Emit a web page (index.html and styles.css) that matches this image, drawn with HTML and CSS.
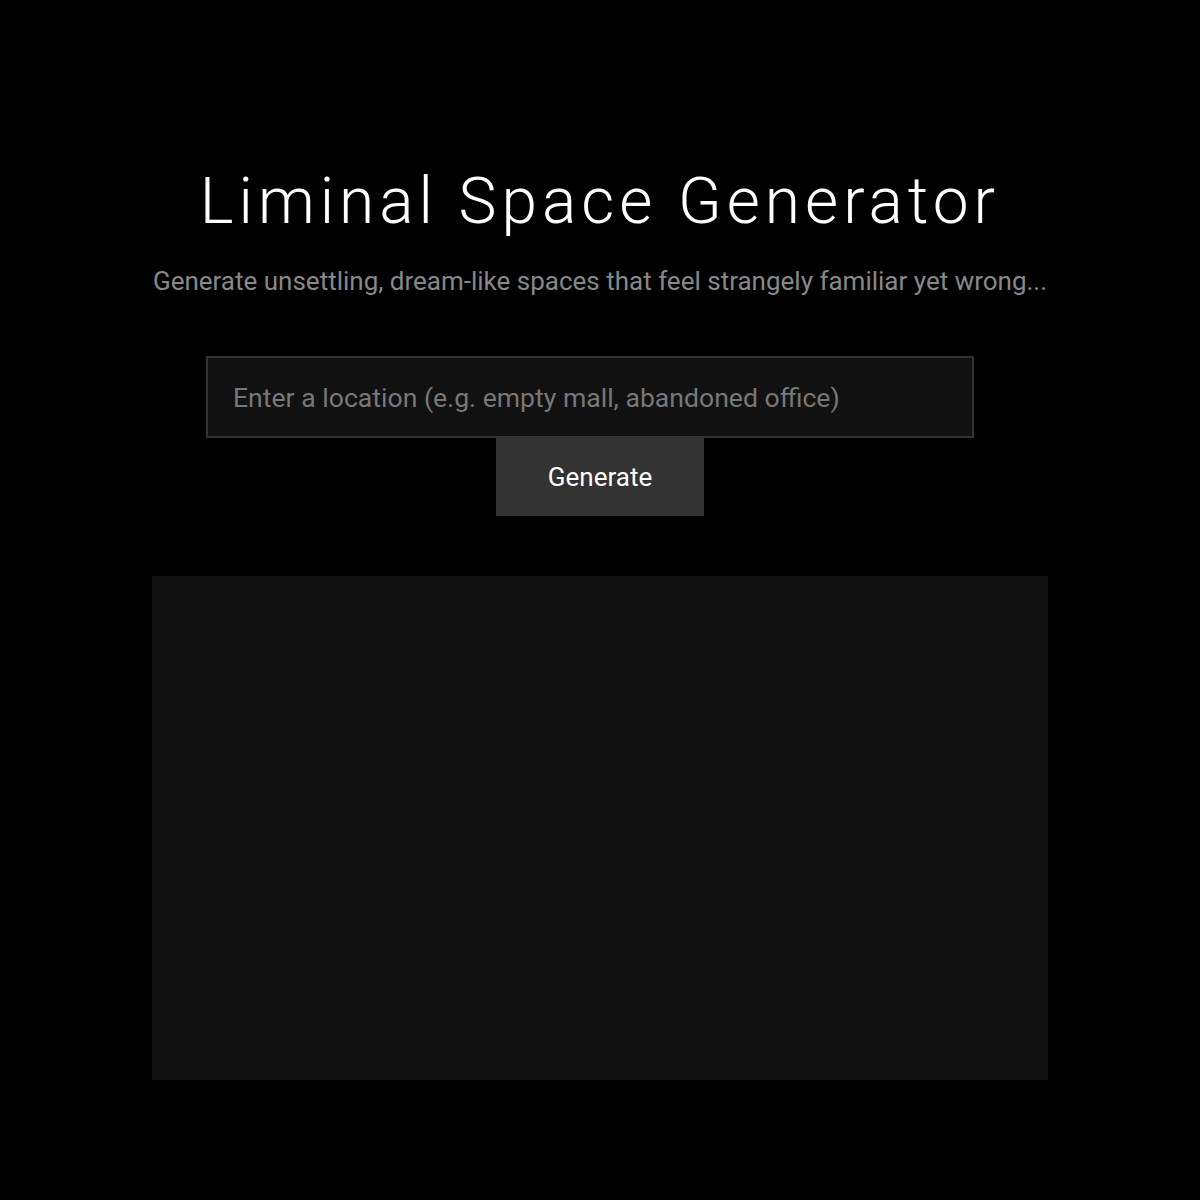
FILE: index.html
```html
<!DOCTYPE html>
<html lang="en">

<head>
  <meta charset="utf-8">
  <title>Liminal Space Generator</title>
  <link rel="stylesheet" href="styles.css">
</head>

<body>
  <div class="container">
    <h1>Liminal Space Generator</h1>
    <p class="subtitle">Generate unsettling, dream-like spaces that feel strangely familiar yet wrong...</p>

    <form class="controls">
      <input type="text" class="location" placeholder="Enter a location (e.g. empty mall, abandoned office)">
      <button type="button" class="generate">Generate</button>
    </form>

    <div class="output"></div>
  </div>
</body>

</html>
```

FILE: styles.css
```css
* {
  box-sizing: border-box;
}

body {
  margin: 0;
  background: #000;
  color: #fff;
  font-family: Roboto, "Liberation Sans", sans-serif;
}

.container {
  width: 896px;
  margin: 0 auto;
  padding-top: 160px;
  text-align: center;
}

h1 {
  margin: 0;
  font-size: 64px;
  font-weight: 300;
  letter-spacing: 5px;
  line-height: 84px;
}

.subtitle {
  margin: 22px 0 0;
  color: #888;
  font-size: 26px;
  line-height: 30px;
}

.controls {
  display: flex;
  flex-wrap: wrap;
  justify-content: center;
  margin-top: 60px;
}

.location {
  width: 768px;
  height: 82px;
  margin-right: 20px;
  padding: 0 25px;
  background: #111;
  border: 2px solid #333;
  color: #fff;
  font-family: inherit;
  font-size: 26.6px;
  outline: none;
}

.location::placeholder {
  color: #777;
}

.generate {
  width: 208px;
  height: 79px;
  margin-top: -1px;
  background: #333;
  border: none;
  color: #fff;
  font-family: inherit;
  font-size: 26px;
}

.output {
  height: 504px;
  margin-top: 60px;
  background: #111;
}
```
